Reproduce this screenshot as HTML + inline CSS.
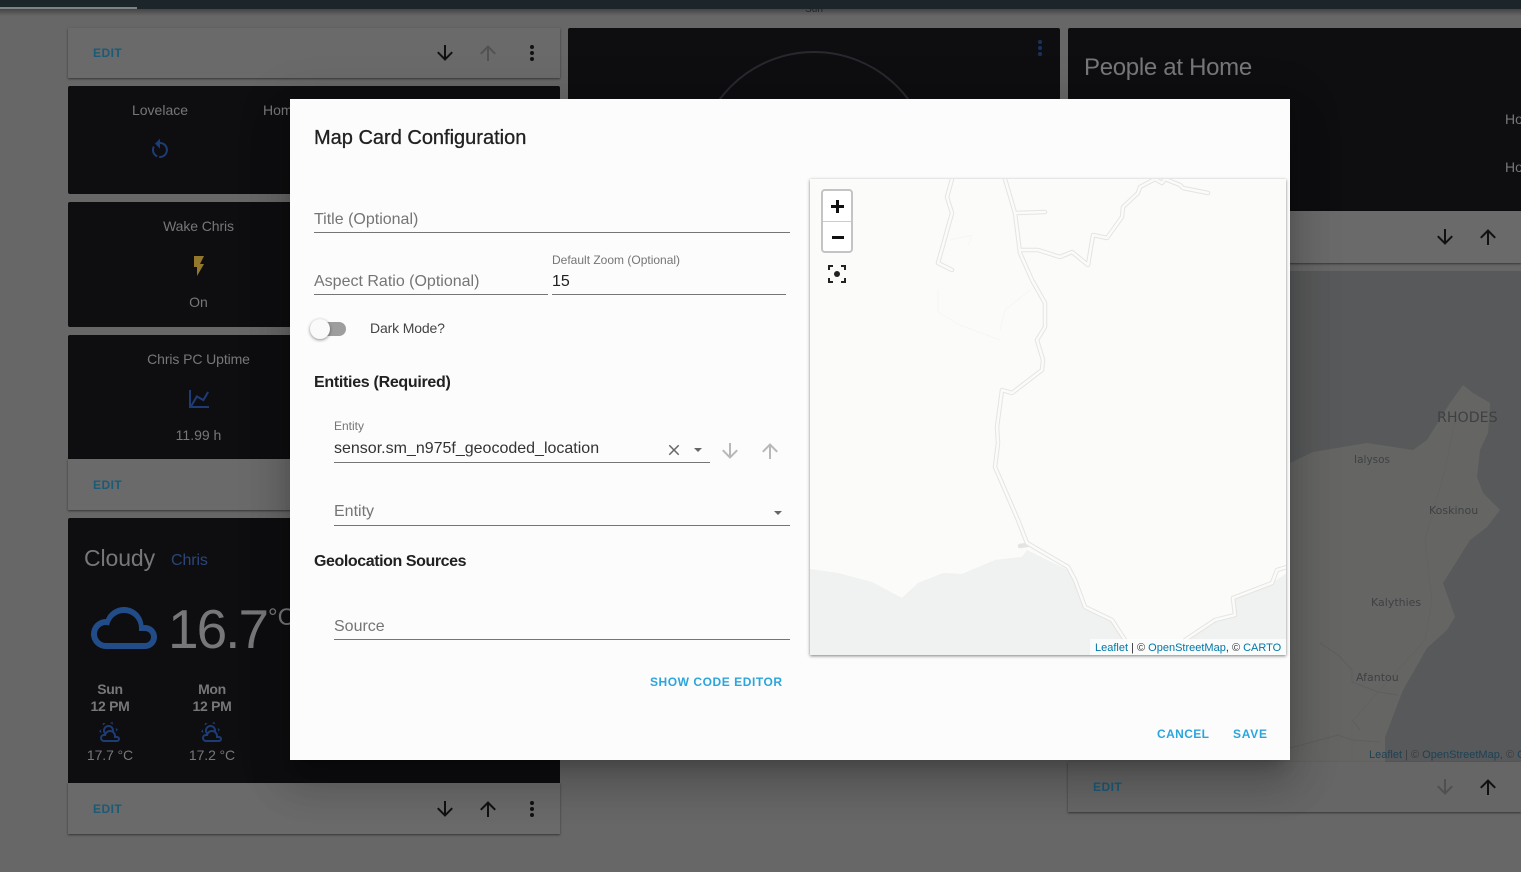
<!DOCTYPE html>
<html><head><meta charset="utf-8"><title>Map Card Configuration</title>
<style>
html,body{margin:0;padding:0;width:1521px;height:872px;overflow:hidden;background:#676767;font-family:"Liberation Sans",sans-serif}
.b{position:absolute}
.t{position:absolute;white-space:nowrap;height:20px;line-height:20px}
.c{transform:translateX(-50%)}
.card{position:absolute;background:#0e0e11;border-radius:2px}
.act{position:absolute;background:#6a6a6a;box-shadow:0 1px 2px rgba(0,0,0,.5)}
.edit{font-size:12px;font-weight:bold;letter-spacing:.45px;color:#1c5a76}
.g{color:#77777a;font-size:14px}
.ic{position:absolute;width:24px;height:24px}
.dlg{position:absolute;left:290px;top:99px;width:1000px;height:661px;background:#fcfcfc;box-shadow:0 11px 15px -7px rgba(0,0,0,.2),0 24px 38px 3px rgba(0,0,0,.14),0 9px 46px 8px rgba(0,0,0,.12)}
.ln{position:absolute;height:1px;background:#757575}
.lb{color:#757575;font-size:16px}
.sm{color:#757575;font-size:12px}
.h{font-size:16px;font-weight:bold;color:#212121}
.btn{font-size:12px;font-weight:bold;color:#2ba6dc}
.ml{color:#3f4043;font-family:"DejaVu Sans",sans-serif;font-size:11px}
.att a{color:#0078a8;text-decoration:none}
</style></head><body>

<div class="b" style="left:0;top:9px;width:1521px;height:7px;background:linear-gradient(#454545,#676767)"></div>
<div class="t c" style="left:814px;top:0;font-size:10px;color:#222">Sun</div>
<div class="b" style="left:0;top:0;width:1521px;height:9px;background:#1c2529"></div>
<div class="b" style="left:0;top:7px;width:137px;height:2px;background:#7d8386"></div>

<!-- left column -->
<div class="act" style="left:68px;top:28px;width:492px;height:50px"></div>
<div class="t edit" style="left:93px;top:43px">EDIT</div>
<svg class="ic" style="left:433px;top:41px" viewBox="0 0 24 24"><path fill="#111" d="M11,4H13V16L18.5,10.5L19.92,11.92L12,19.84L4.08,11.92L5.5,10.5L11,16V4Z"/></svg>
<svg class="ic" style="left:476px;top:41px" viewBox="0 0 24 24"><path fill="#525252" d="M13,20H11V8L5.5,13.5L4.08,12.08L12,4.16L19.92,12.08L18.5,13.5L13,8V20Z"/></svg>
<svg class="ic" style="left:520px;top:41px" viewBox="0 0 24 24"><path fill="#111" d="M12,16A2,2 0 0,1 14,18A2,2 0 0,1 12,20A2,2 0 0,1 10,18A2,2 0 0,1 12,16M12,10A2,2 0 0,1 14,12A2,2 0 0,1 12,14A2,2 0 0,1 10,12A2,2 0 0,1 12,10M12,4A2,2 0 0,1 14,6A2,2 0 0,1 12,8A2,2 0 0,1 10,6A2,2 0 0,1 12,4Z"/></svg>

<div class="card" style="left:68px;top:86px;width:492px;height:108px"></div>
<div class="t c g" style="left:160px;top:100px">Lovelace</div>
<div class="t g" style="left:263px;top:100px">Home</div>
<svg class="ic" style="left:148px;top:138px" viewBox="0 0 24 24"><path fill="#1d3c76" d="M12,4C14.1,4 16.1,4.8 17.6,6.3C20.7,9.4 20.7,14.5 17.6,17.6C15.8,19.5 13.3,20.2 10.9,19.9L11.4,17.9C13.1,18.1 14.9,17.5 16.2,16.2C18.5,13.9 18.5,10.1 16.2,7.7C15.1,6.6 13.5,6 12,6V10.6L7,5.6L12,0.6V4M6.3,17.6C3.7,15 3.3,11 5.1,7.9L6.6,9.4C5.5,11.6 5.9,14.4 7.8,16.2C8.3,16.7 8.9,17.1 9.6,17.4L9,19.4C8,19 7.1,18.4 6.3,17.6Z"/></svg>

<div class="card" style="left:68px;top:202px;width:492px;height:125px"></div>
<div class="t c g" style="left:198.5px;top:216px;letter-spacing:-.1px">Wake Chris</div>
<svg class="ic" style="left:187px;top:254px" viewBox="0 0 24 24"><path fill="#93772d" d="M7,2V13H10V22L17,10H13L17,2H7Z"/></svg>
<div class="t c g" style="left:198.5px;top:292px">On</div>

<div class="card" style="left:68px;top:335px;width:492px;height:124px;border-radius:2px 2px 0 0"></div>
<div class="t c g" style="left:198.5px;top:349px;letter-spacing:-.1px">Chris PC Uptime</div>
<svg class="ic" style="left:187px;top:387px" viewBox="0 0 24 24"><path fill="#1d3c76" d="M16,11.78L20.24,4.45L21.97,5.45L16.74,14.5L10.23,10.75L5.46,19H22V21H2V3H4V17.54L9.5,8L16,11.78Z"/></svg>
<div class="t c g" style="left:198.5px;top:425px">11.99 h</div>
<div class="act" style="left:68px;top:459px;width:492px;height:51px"></div>
<div class="t edit" style="left:93px;top:475px">EDIT</div>

<div class="card" style="left:68px;top:518px;width:492px;height:265px;border-radius:2px 2px 0 0"></div>
<div class="t" style="left:84px;top:548px;font-size:23px;color:#77777a;letter-spacing:-.1px">Cloudy</div>
<div class="t" style="left:171px;top:551px;font-size:16px;color:#2a4678;letter-spacing:-.1px">Chris</div>
<svg class="b" style="left:88px;top:592px;width:72px;height:72px" viewBox="0 0 24 24"><path fill="#214c88" d="M6,19A5,5 0 0,1 1,14A5,5 0 0,1 6,9C7,6.65 9.3,5 12,5C15.43,5 18.24,7.66 18.5,11.03L19,11A4,4 0 0,1 23,15A4,4 0 0,1 19,19H6M19,13H17V12A5,5 0 0,0 12,7C9.5,7 7.45,8.82 7.06,11.19C6.73,11.07 6.37,11 6,11A3,3 0 0,0 3,14A3,3 0 0,0 6,17H19A2,2 0 0,0 21,15A2,2 0 0,0 19,13Z"/></svg>
<div class="t" style="left:168px;top:619px;font-size:55px;color:#77777a;letter-spacing:-2px">16.7</div>
<div class="t" style="left:268px;top:608px;font-size:24px;color:#77777a">°C</div>
<div class="t c g" style="left:110px;top:679px;font-weight:bold;letter-spacing:-.3px">Sun</div>
<div class="t c g" style="left:110px;top:696px;font-weight:bold;letter-spacing:-.3px">12 PM</div>
<svg class="ic" style="left:98px;top:720px" viewBox="0 0 24 24"><path fill="#1d3c76" d="M12.74,5.47C15.1,6.5 16.35,9.03 15.92,11.46C17.19,12.56 18,14.19 18,16V16.17C18.31,16.06 18.65,16 19,16A3,3 0 0,1 22,19A3,3 0 0,1 19,22H6A4,4 0 0,1 2,18A4,4 0 0,1 6,14H6.27C5,12.45 4.6,10.24 5.5,8.26C6.72,5.5 9.97,4.24 12.74,5.47M11.93,7.3C10.16,6.5 8.09,7.31 7.31,9.07C6.85,10.09 6.93,11.25 7.41,12.17C8.5,10.83 10.16,10 12,10C12.7,10 13.38,10.12 14,10.34C13.94,9.06 13.18,7.86 11.93,7.3M13.55,3.64C13,3.4 12.45,3.23 11.88,3.12L14.37,1.82L15.27,4.71C14.76,4.3 14.19,3.93 13.55,3.64M6.09,4.44C5.6,4.79 5.17,5.19 4.8,5.63L4.91,2.82L7.87,3.5C7.25,3.71 6.65,4.03 6.09,4.44M18,9.71C17.91,9.12 17.78,8.55 17.59,8L19.97,9.5L17.92,11.73C18.03,11.08 18.05,10.4 18,9.71M3.04,11.3C3.11,11.9 3.24,12.47 3.43,13L1.06,11.5L3.1,9.28C3,9.93 2.97,10.61 3.04,11.3M19,18H16V16A4,4 0 0,0 12,12A4,4 0 0,0 8,16H6A2,2 0 0,0 4,18A2,2 0 0,0 6,20H19A1,1 0 0,0 20,19A1,1 0 0,0 19,18Z"/></svg>
<div class="t c g" style="left:110px;top:745px;letter-spacing:-.1px">17.7 °C</div>
<div class="t c g" style="left:212px;top:679px;font-weight:bold;letter-spacing:-.3px">Mon</div>
<div class="t c g" style="left:212px;top:696px;font-weight:bold;letter-spacing:-.3px">12 PM</div>
<svg class="ic" style="left:200px;top:720px" viewBox="0 0 24 24"><path fill="#1d3c76" d="M12.74,5.47C15.1,6.5 16.35,9.03 15.92,11.46C17.19,12.56 18,14.19 18,16V16.17C18.31,16.06 18.65,16 19,16A3,3 0 0,1 22,19A3,3 0 0,1 19,22H6A4,4 0 0,1 2,18A4,4 0 0,1 6,14H6.27C5,12.45 4.6,10.24 5.5,8.26C6.72,5.5 9.97,4.24 12.74,5.47M11.93,7.3C10.16,6.5 8.09,7.31 7.31,9.07C6.85,10.09 6.93,11.25 7.41,12.17C8.5,10.83 10.16,10 12,10C12.7,10 13.38,10.12 14,10.34C13.94,9.06 13.18,7.86 11.93,7.3M13.55,3.64C13,3.4 12.45,3.23 11.88,3.12L14.37,1.82L15.27,4.71C14.76,4.3 14.19,3.93 13.55,3.64M6.09,4.44C5.6,4.79 5.17,5.19 4.8,5.63L4.91,2.82L7.87,3.5C7.25,3.71 6.65,4.03 6.09,4.44M18,9.71C17.91,9.12 17.78,8.55 17.59,8L19.97,9.5L17.92,11.73C18.03,11.08 18.05,10.4 18,9.71M3.04,11.3C3.11,11.9 3.24,12.47 3.43,13L1.06,11.5L3.1,9.28C3,9.93 2.97,10.61 3.04,11.3M19,18H16V16A4,4 0 0,0 12,12A4,4 0 0,0 8,16H6A2,2 0 0,0 4,18A2,2 0 0,0 6,20H19A1,1 0 0,0 20,19A1,1 0 0,0 19,18Z"/></svg>
<div class="t c g" style="left:212px;top:745px;letter-spacing:-.1px">17.2 °C</div>
<div class="act" style="left:68px;top:783px;width:492px;height:51px"></div>
<div class="t edit" style="left:93px;top:799px">EDIT</div>
<svg class="ic" style="left:433px;top:797px" viewBox="0 0 24 24"><path fill="#111" d="M11,4H13V16L18.5,10.5L19.92,11.92L12,19.84L4.08,11.92L5.5,10.5L11,16V4Z"/></svg>
<svg class="ic" style="left:476px;top:797px" viewBox="0 0 24 24"><path fill="#111" d="M13,20H11V8L5.5,13.5L4.08,12.08L12,4.16L19.92,12.08L18.5,13.5L13,8V20Z"/></svg>
<svg class="ic" style="left:520px;top:797px" viewBox="0 0 24 24"><path fill="#111" d="M12,16A2,2 0 0,1 14,18A2,2 0 0,1 12,20A2,2 0 0,1 10,18A2,2 0 0,1 12,16M12,10A2,2 0 0,1 14,12A2,2 0 0,1 12,14A2,2 0 0,1 10,12A2,2 0 0,1 12,10M12,4A2,2 0 0,1 14,6A2,2 0 0,1 12,8A2,2 0 0,1 10,6A2,2 0 0,1 12,4Z"/></svg>

<!-- middle column -->
<div class="card" style="left:568px;top:28px;width:492px;height:120px"></div>
<svg class="b" style="left:700px;top:40px;width:240px;height:70px" viewBox="700 40 240 70"><circle cx="814" cy="169.5" r="117.5" fill="none" stroke="#28282f" stroke-width="2"/></svg>
<svg class="ic" style="left:1028px;top:36px" viewBox="0 0 24 24"><path fill="#1a3260" d="M12,16A2,2 0 0,1 14,18A2,2 0 0,1 12,20A2,2 0 0,1 10,18A2,2 0 0,1 12,16M12,10A2,2 0 0,1 14,12A2,2 0 0,1 12,14A2,2 0 0,1 10,12A2,2 0 0,1 12,10M12,4A2,2 0 0,1 14,6A2,2 0 0,1 12,8A2,2 0 0,1 10,6A2,2 0 0,1 12,4Z"/></svg>

<!-- right column -->
<div class="card" style="left:1068px;top:28px;width:453px;height:183px;border-radius:2px 0 0 0"></div>
<div class="t" style="left:1084px;top:58px;font-size:24px;color:#77777a;letter-spacing:-.3px">People at Home</div>
<div class="t g" style="left:1505px;top:109px">Home</div>
<div class="t g" style="left:1505px;top:157px">Home</div>
<div class="act" style="left:1068px;top:211px;width:453px;height:52px"></div>
<svg class="ic" style="left:1433px;top:225px" viewBox="0 0 24 24"><path fill="#111" d="M11,4H13V16L18.5,10.5L19.92,11.92L12,19.84L4.08,11.92L5.5,10.5L11,16V4Z"/></svg>
<svg class="ic" style="left:1476px;top:225px" viewBox="0 0 24 24"><path fill="#111" d="M13,20H11V8L5.5,13.5L4.08,12.08L12,4.16L19.92,12.08L18.5,13.5L13,8V20Z"/></svg>

<svg class="b" style="left:1068px;top:271px;width:453px;height:491px" viewBox="1068 271 453 491">
<rect x="1068" y="271" width="453" height="491" fill="#58595a"/>
<path fill="#656664" d="M1068,500L1290,463L1313,452L1367,443L1413,450L1427,440L1450,403L1463,385L1473,393L1490,403L1488,433L1480,450L1477,477L1483,493L1500,510L1487,527L1470,540L1443,583L1455,617L1447,630L1427,648L1403,690L1385,737L1385,762L1068,762Z"/>
<g fill="none" stroke="#5e5f5d" stroke-width="1"><path d="M1320,643L1338,655L1352,670L1352,682L1378,692L1398,695"/><path d="M1352,720L1360,730M1290,748L1338,735L1352,740L1380,742"/></g>
<g fill="none" stroke="#626361" stroke-width="1"><path d="M1352,762L1352,722L1378,692L1425,640L1432,600L1425,540L1445,470L1455,420"/></g>
</svg>
<div class="t ml" style="left:1437px;top:408px;font-size:14.2px;color:#3e3f42">RHODES</div>
<div class="t ml" style="left:1354px;top:450px;font-size:10.5px">Ialysos</div>
<div class="t ml" style="left:1429px;top:501px">Koskinou</div>
<div class="t ml" style="left:1371px;top:593px">Kalythies</div>
<div class="t ml" style="left:1356px;top:668px">Afantou</div>
<div class="t" style="left:1369px;top:745px;font-size:11px;color:#3a3b3c"><span style="color:#1d4256">Leaflet</span> | © <span style="color:#1d4256">OpenStreetMap</span>, © <span style="color:#1d4256">CARTO</span></div>
<div class="act" style="left:1068px;top:762px;width:453px;height:50px;background:#666"></div>
<div class="t edit" style="left:1093px;top:777px">EDIT</div>
<svg class="ic" style="left:1433px;top:775px" viewBox="0 0 24 24"><path fill="#505050" d="M11,4H13V16L18.5,10.5L19.92,11.92L12,19.84L4.08,11.92L5.5,10.5L11,16V4Z"/></svg>
<svg class="ic" style="left:1476px;top:775px" viewBox="0 0 24 24"><path fill="#111" d="M13,20H11V8L5.5,13.5L4.08,12.08L12,4.16L19.92,12.08L18.5,13.5L13,8V20Z"/></svg>

<!-- dialog -->
<div class="dlg"></div>
<div class="t" style="left:314px;top:128px;font-size:20px;color:#212121;-webkit-text-stroke:.3px #212121">Map Card Configuration</div>

<div class="t lb" style="left:314px;top:210px">Title (Optional)</div>
<div class="ln" style="left:314px;top:232px;width:476px"></div>
<div class="t lb" style="left:314px;top:272px">Aspect Ratio (Optional)</div>
<div class="ln" style="left:314px;top:294px;width:234px"></div>
<div class="t sm" style="left:552px;top:250px">Default Zoom (Optional)</div>
<div class="t" style="left:552px;top:272px;font-size:16px;color:#212121">15</div>
<div class="ln" style="left:552px;top:294px;width:234px"></div>

<div class="b" style="left:318px;top:322px;width:28px;height:14px;border-radius:7px;background:#9e9e9e"></div>
<div class="b" style="left:310px;top:319px;width:20px;height:20px;border-radius:50%;background:#fafafa;box-shadow:0 1px 3px rgba(0,0,0,.45)"></div>
<div class="t" style="left:370px;top:318px;font-size:14px;color:#444;letter-spacing:-.15px">Dark Mode?</div>

<div class="t h" style="left:314px;top:373px;letter-spacing:-.3px">Entities (Required)</div>
<div class="t sm" style="left:334px;top:416px">Entity</div>
<div class="t" style="left:334px;top:439px;font-size:16px;color:#333">sensor.sm_n975f_geocoded_location</div>
<div class="ln" style="left:334px;top:462px;width:376px"></div>
<svg class="b" style="left:665px;top:441px;width:18px;height:18px" viewBox="0 0 24 24"><path fill="#666" d="M19,6.41L17.59,5L12,10.59L6.41,5L5,6.41L10.59,12L5,17.59L6.41,19L12,13.41L17.59,19L19,17.59L13.41,12L19,6.41Z"/></svg>
<svg class="ic" style="left:686px;top:438px" viewBox="0 0 24 24"><path fill="#666" d="M8,10L12,14L16,10H8Z"/></svg>
<svg class="ic" style="left:718px;top:439px" viewBox="0 0 24 24"><path fill="#b8b8b8" d="M11,4H13V16L18.5,10.5L19.92,11.92L12,19.84L4.08,11.92L5.5,10.5L11,16V4Z"/></svg>
<svg class="ic" style="left:758px;top:439px" viewBox="0 0 24 24"><path fill="#b8b8b8" d="M13,20H11V8L5.5,13.5L4.08,12.08L12,4.16L19.92,12.08L18.5,13.5L13,8V20Z"/></svg>

<div class="t lb" style="left:334px;top:502px">Entity</div>
<div class="ln" style="left:334px;top:525px;width:456px"></div>
<svg class="ic" style="left:766px;top:501px" viewBox="0 0 24 24"><path fill="#666" d="M8,10L12,14L16,10H8Z"/></svg>

<div class="t h" style="left:314px;top:552px;letter-spacing:-.42px">Geolocation Sources</div>
<div class="t lb" style="left:334px;top:617px">Source</div>
<div class="ln" style="left:334px;top:639px;width:456px"></div>

<div class="t btn" style="left:650px;top:672px;letter-spacing:.55px">SHOW CODE EDITOR</div>
<div class="t btn" style="left:1157px;top:724px;letter-spacing:.4px">CANCEL</div>
<div class="t btn" style="left:1233px;top:724px;letter-spacing:.75px">SAVE</div>

<!-- map preview -->
<svg class="b" style="left:810px;top:179px;width:476px;height:476px;box-shadow:0 1px 3px rgba(0,0,0,.5)" viewBox="810 179 476 476">
<rect x="810" y="179" width="476" height="476" fill="#fbfbf9"/>
<path fill="#eff2f0" d="M810,569L838,573L872,582L902,598L918,583L943,573L962,574L995,560L1022,557L1027,550L1068,570L1075,583L1085,608L1112,620L1125,640L1183,640L1215,620L1237,615L1233,598L1272,583L1287,573V655H810Z"/>
<g fill="none" stroke-linejoin="round" stroke-linecap="round">
<g stroke="#e4e4e2" stroke-width="4.5">
<path d="M1005,179L1015,213L1020,253L1032,280L1045,303L1045,327L1037,340L1043,360L1042,370L1012,393L1002,390L997,427L998,443L995,467L1018,520L1027,543L1068,567L1075,580L1085,607L1112,620L1125,640"/>
<path d="M1020,250L1038,250L1060,257L1072,252L1088,265L1093,235L1107,238L1122,217L1123,207L1138,193L1140,187L1155,179L1162,183L1165,179L1180,185L1183,188L1208,193"/>
<path d="M1015,213L1045,212"/>
<path d="M952,179L947,197L952,213L938,263L952,270"/>
<path d="M1185,640L1215,620L1235,615L1233,598L1272,583L1277,570L1287,567"/>
<path d="M1020,546L1027,545"/>
</g>
<g stroke="#fbfbf9" stroke-width="2.5">
<path d="M1005,179L1015,213L1020,253L1032,280L1045,303L1045,327L1037,340L1043,360L1042,370L1012,393L1002,390L997,427L998,443L995,467L1018,520L1027,543L1068,567L1075,580L1085,607L1112,620L1125,640"/>
<path d="M1020,250L1038,250L1060,257L1072,252L1088,265L1093,235L1107,238L1122,217L1123,207L1138,193L1140,187L1155,179L1162,183L1165,179L1180,185L1183,188L1208,193"/>
<path d="M1015,213L1045,212"/>
<path d="M952,179L947,197L952,213L938,263L952,270"/>
<path d="M1185,640L1215,620L1235,615L1233,598L1272,583L1277,570L1287,567"/>
</g>
<g stroke="#f6f6f4" stroke-width="1"><path d="M938,290L938,312L960,325L1000,340M1000,330L1005,310L1030,290M950,240L972,235L968,245"/></g>
</g>
</svg>
<div class="b" style="left:821px;top:189px;width:28px;height:60px;border:2px solid #c4c4c4;border-radius:4px;background:#fff"></div>
<div class="b" style="left:823px;top:221px;width:28px;height:1px;background:#ccc"></div>
<div class="b" style="left:831px;top:204.5px;width:13px;height:3px;background:#111"></div>
<div class="b" style="left:836px;top:199.5px;width:3px;height:13px;background:#111"></div>
<div class="b" style="left:832px;top:236px;width:12px;height:2.5px;background:#111"></div>
<svg class="b" style="left:828px;top:265px;width:18px;height:18px" viewBox="0 0 18 18"><path fill="none" stroke="#222" stroke-width="2" d="M1,5V1H5M13,1H17V5M17,13V17H13M5,17H1V13"/><circle cx="9" cy="9" r="3" fill="#222"/></svg>
<div class="b" style="left:1090px;top:639px;width:196px;height:16px;background:rgba(255,255,255,.7)"></div>
<div class="t att" style="left:1095px;top:638px;font-size:11px;color:#333"><a>Leaflet</a> | © <a>OpenStreetMap</a>, © <a>CARTO</a></div>
</body></html>
